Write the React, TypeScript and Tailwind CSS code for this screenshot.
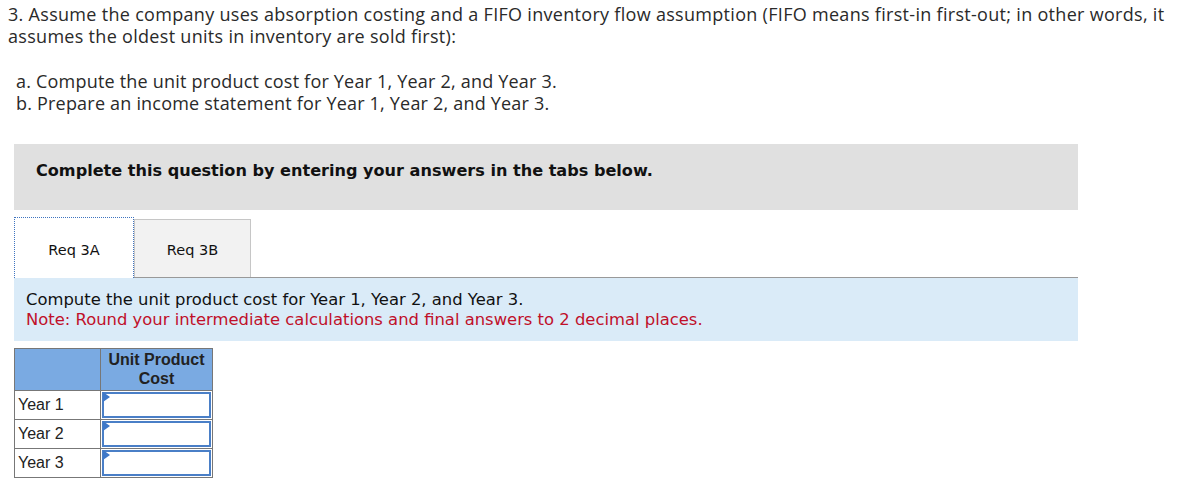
import React from "react";

function InputCell() {
  return (
    <td className="border border-[#777] p-0 align-top">
      <div className="relative h-[28px] w-[111px]">
        <div className="absolute inset-[1px] border-2 border-[#4a7fc7] bg-white" />
        <svg className="absolute left-[2px] top-[1px]" width="8" height="10" viewBox="0 0 8 10">
          <polygon points="0,0 7,5 0,10" fill="#3f78c8" />
        </svg>
      </div>
    </td>
  );
}

export default function App() {
  const rows = ["Year 1", "Year 2", "Year 3"];
  return (
    <div className="w-[1180px] h-[479px] bg-white overflow-hidden relative">
      <div className="pt-[3px] pl-[8px] pr-[4px] text-[18px] leading-[22px] tracking-[0.3px] text-[#2a2a2a] whitespace-nowrap" style={{ fontFamily: "'Open Sans', Lato, sans-serif" }}>
        <p>
          3. Assume the company uses absorption costing and a FIFO inventory flow assumption (FIFO means first-in first-out; in other words, it
          <br />
          assumes the oldest units in inventory are sold first):
        </p>
        <div className="mt-[23px] pl-[8px] tracking-[0.2px]">
          <p>a. Compute the unit product cost for Year 1, Year 2, and Year 3.</p>
          <p>b. Prepare an income statement for Year 1, Year 2, and Year 3.</p>
        </div>
      </div>

      <div className="mx-[14px] mt-[30px] w-[1064px]">
        <div className="h-[66px] bg-[#e0e0e0] pl-[22px] pt-[17px] leading-[20px]" style={{ fontFamily: "'DejaVu Sans', Verdana, sans-serif" }}>
          <span className="text-[16.1px] font-bold text-[#111]">Complete this question by entering your answers in the tabs below.</span>
        </div>

        <div className="flex items-end mt-[7px] border-b border-[#999]" style={{ fontFamily: "'DejaVu Sans', Verdana, sans-serif" }}>
          <div className="w-[120px] h-[61px] -mb-px bg-white border border-dotted border-[#3f74c0] border-b-0 flex items-center justify-center pt-[5px] text-[14.5px] text-[#111]">
            Req 3A
          </div>
          <div className="w-[117px] h-[58px] bg-[#f2f2f2] border border-[#c6c6c6] border-b-0 flex items-center justify-center pt-[4px] text-[14.5px] text-[#111]">
            Req 3B
          </div>
        </div>

        <div className="h-[63px] bg-[#daebf8] pl-[12px] pt-[12px] text-[16.4px] leading-[20px]" style={{ fontFamily: "'DejaVu Sans', Verdana, sans-serif" }}>
          <p className="text-[#111]">Compute the unit product cost for Year 1, Year 2, and Year 3.</p>
          <p className="text-[#c0102a]">Note: Round your intermediate calculations and final answers to 2 decimal places.</p>
        </div>

        <table className="mt-[7px] border-collapse text-[16px]" style={{ fontFamily: "'Liberation Sans', Arial, sans-serif" }}>
          <thead>
            <tr className="bg-[#7aaae2]">
              <th className="w-[86px] h-[42px] border border-[#777]" />
              <th className="w-[112px] border border-[#777] font-bold text-[#222] leading-[19px] align-top pt-[1px]">
                Unit Product<br />Cost
              </th>
            </tr>
          </thead>
          <tbody>
            {rows.map((r) => (
              <tr key={r} className="h-[29px]">
                <td className="border border-[#777] pl-[3px] text-[#222]">{r}</td>
                <InputCell />
              </tr>
            ))}
          </tbody>
        </table>
      </div>
    </div>
  );
}
